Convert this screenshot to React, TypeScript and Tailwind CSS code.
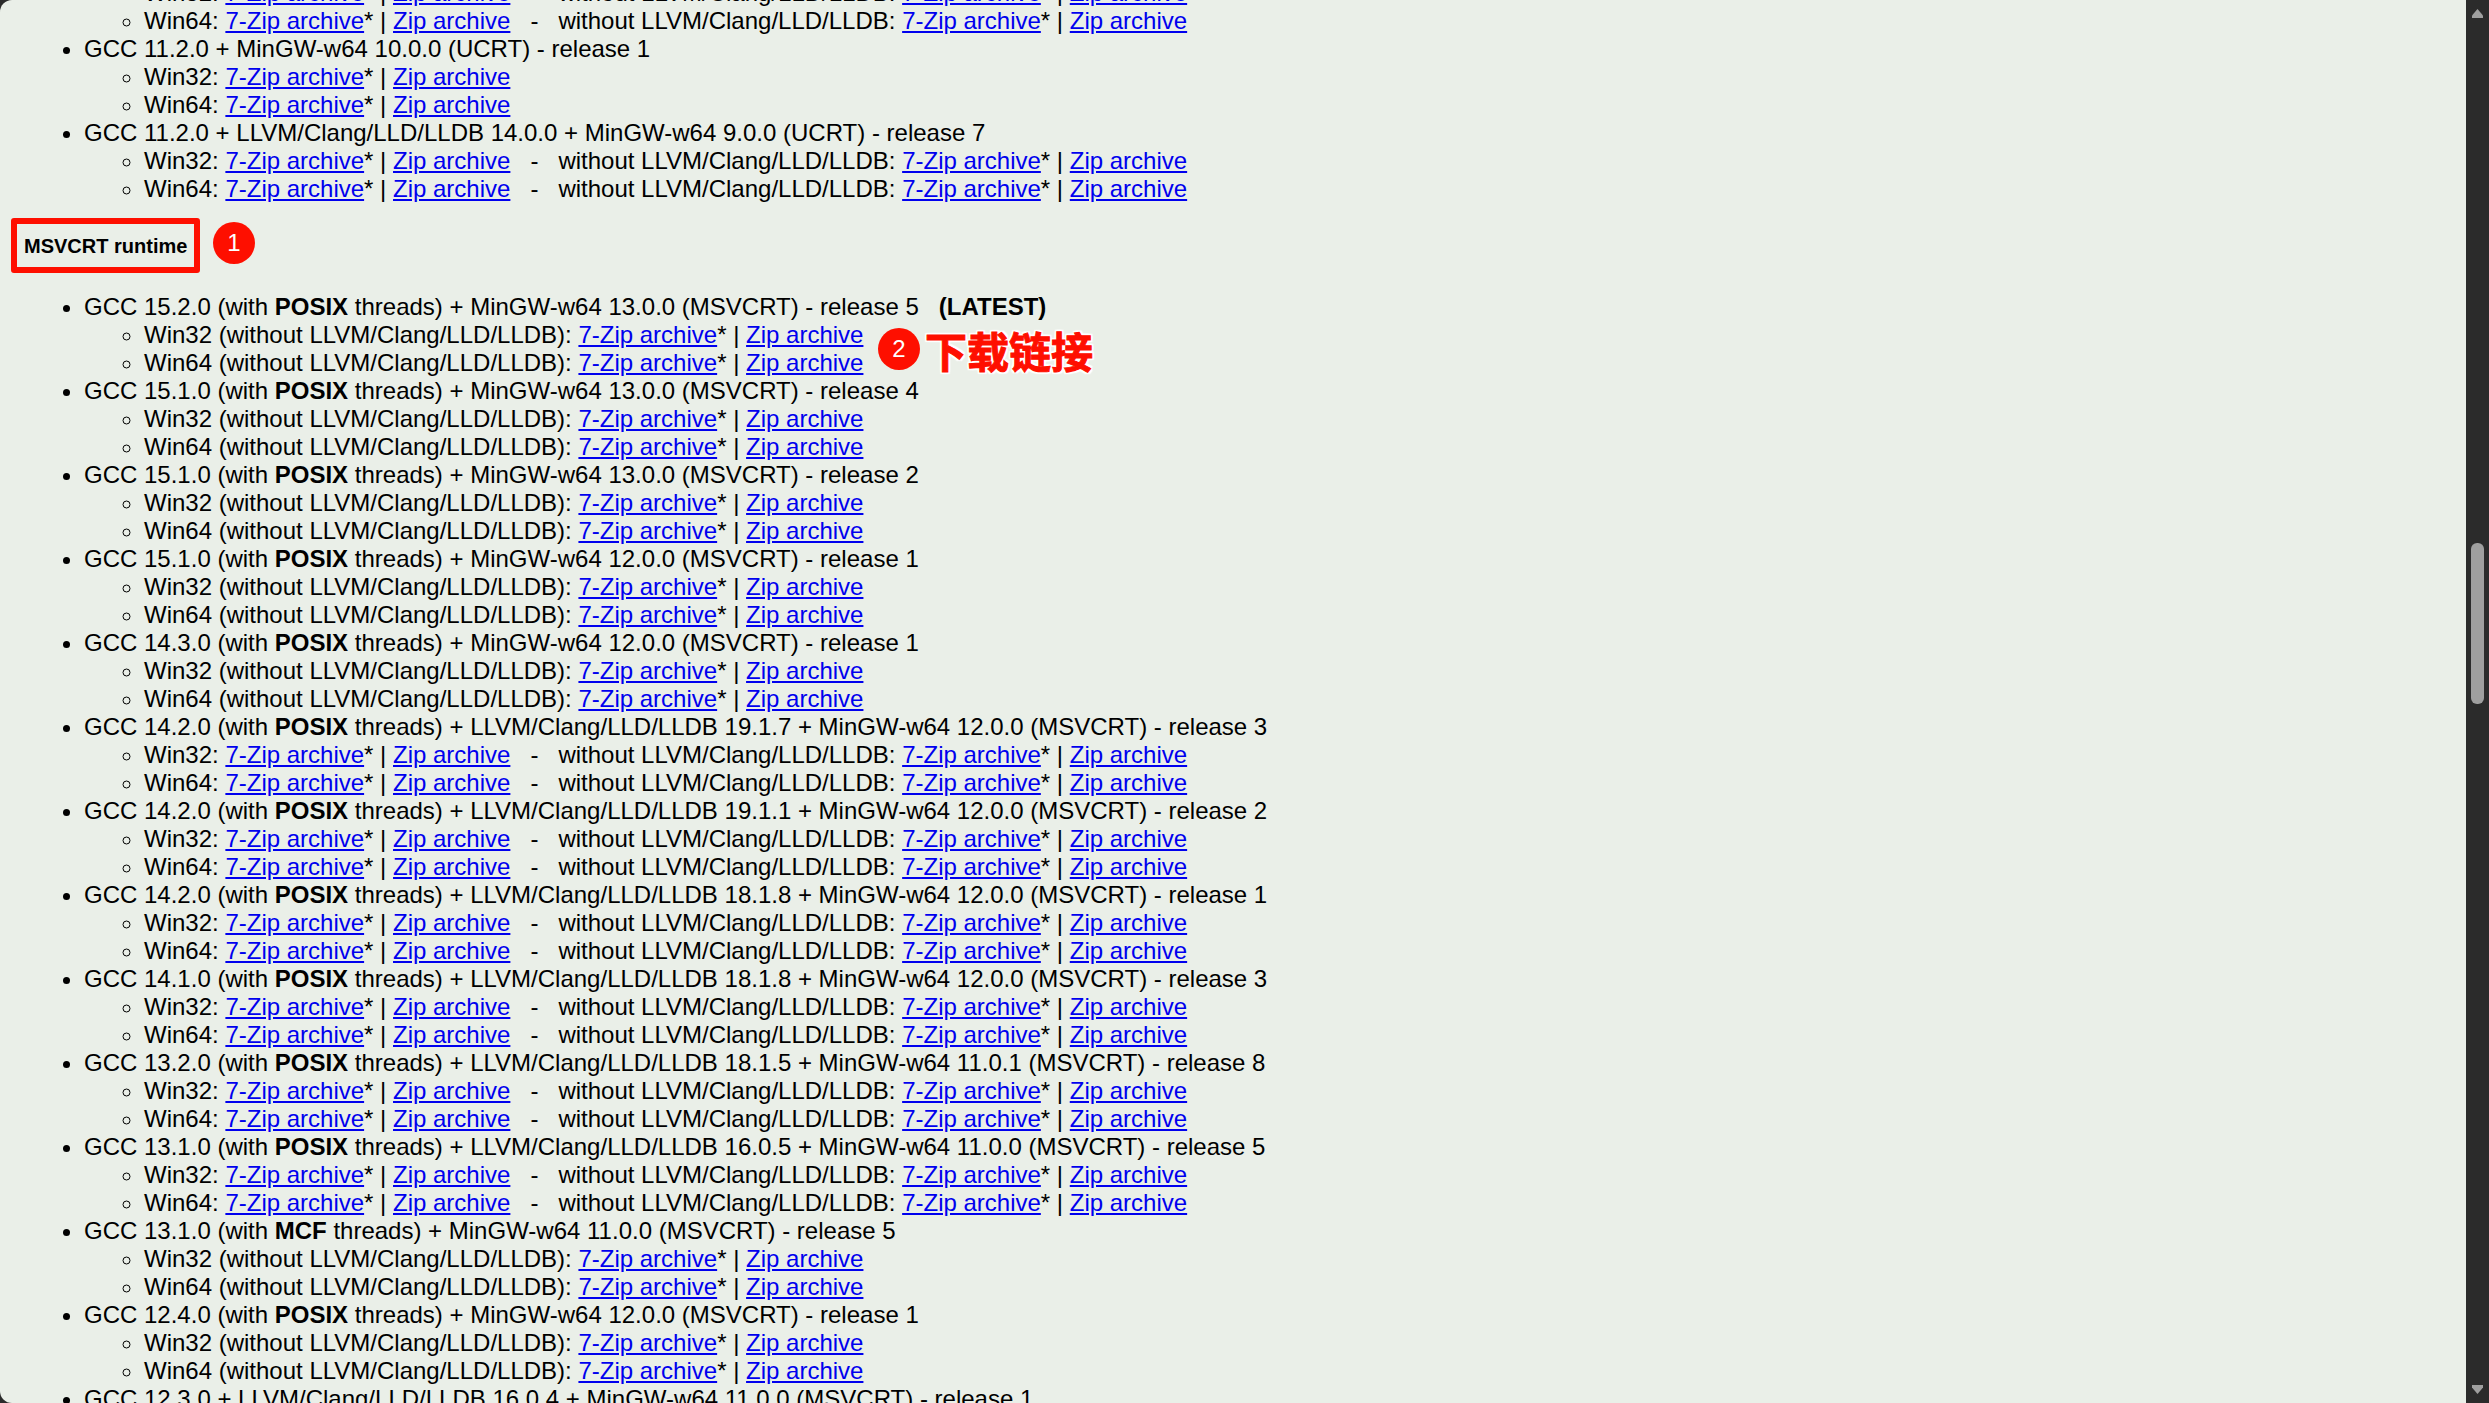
import React from "react";

const Link = ({ children }: { children: React.ReactNode }) => (
  <a href="#" className="text-[#0000ee] underline">{children}</a>
);

const Pair = () => (
  <>
    <Link>7-Zip archive</Link>* | <Link>Zip archive</Link>
  </>
);

const Both = ({ w }: { w: string }) => (
  <li>
    {w}: <Pair />&nbsp;&nbsp; - &nbsp;&nbsp;without LLVM/Clang/LLD/LLDB: <Pair />
  </li>
);

const Plain = ({ w }: { w: string }) => (
  <li>
    {w}: <Pair />
  </li>
);

const Without = ({ w }: { w: string }) => (
  <li>
    {w} (without LLVM/Clang/LLD/LLDB): <Pair />
  </li>
);

type Kind = "both" | "plain" | "without";

const Sub = ({ kind }: { kind: Kind }) => {
  const C = kind === "both" ? Both : kind === "plain" ? Plain : Without;
  return (
    <ul className="list-[circle] pl-[60px]">
      <C w="Win32" />
      <C w="Win64" />
    </ul>
  );
};

const Group = ({ title, kind }: { title: React.ReactNode; kind: Kind }) => (
  <li>
    {title}
    <Sub kind={kind} />
  </li>
);

const Posix = ({ gcc, rest, t = "POSIX" }: { gcc: string; rest: string; t?: string }) => (
  <>
    GCC {gcc} (with <b>{t}</b> threads) + {rest}
  </>
);

const llvmGroups: [string, string][] = [
  ["14.2.0", "LLVM/Clang/LLD/LLDB 19.1.7 + MinGW-w64 12.0.0 (MSVCRT) - release 3"],
  ["14.2.0", "LLVM/Clang/LLD/LLDB 19.1.1 + MinGW-w64 12.0.0 (MSVCRT) - release 2"],
  ["14.2.0", "LLVM/Clang/LLD/LLDB 18.1.8 + MinGW-w64 12.0.0 (MSVCRT) - release 1"],
  ["14.1.0", "LLVM/Clang/LLD/LLDB 18.1.8 + MinGW-w64 12.0.0 (MSVCRT) - release 3"],
  ["13.2.0", "LLVM/Clang/LLD/LLDB 18.1.5 + MinGW-w64 11.0.1 (MSVCRT) - release 8"],
  ["13.1.0", "LLVM/Clang/LLD/LLDB 16.0.5 + MinGW-w64 11.0.0 (MSVCRT) - release 5"],
];

export default function App() {
  return (
    <div className="flex h-screen overflow-hidden bg-[#2b2b2b] font-['Liberation_Sans',Arial,sans-serif] text-[24px] leading-[28px] text-black">
      <main className="relative flex-1 overflow-hidden rounded-l-[12px] bg-[#eaefe8] px-[24px]">
        <div className="-mt-[21px]">
          <ul className="list-disc pl-[60px]">
            <li className="list-none">
              <Sub kind="both" />
            </li>
            <Group title="GCC 11.2.0 + MinGW-w64 10.0.0 (UCRT) - release 1" kind="plain" />
            <Group title="GCC 11.2.0 + LLVM/Clang/LLD/LLDB 14.0.0 + MinGW-w64 9.0.0 (UCRT) - release 7" kind="both" />
          </ul>
          <p className="mt-[31px] mb-[35px] text-[20px] leading-[24px] font-bold">MSVCRT runtime</p>
          <ul className="list-disc pl-[60px]">
            <Group
              title={
                <>
                  <Posix gcc="15.2.0" rest="MinGW-w64 13.0.0 (MSVCRT) - release 5" />
                  &nbsp;&nbsp; <b>(LATEST)</b>
                </>
              }
              kind="without"
            />
            <Group title={<Posix gcc="15.1.0" rest="MinGW-w64 13.0.0 (MSVCRT) - release 4" />} kind="without" />
            <Group title={<Posix gcc="15.1.0" rest="MinGW-w64 13.0.0 (MSVCRT) - release 2" />} kind="without" />
            <Group title={<Posix gcc="15.1.0" rest="MinGW-w64 12.0.0 (MSVCRT) - release 1" />} kind="without" />
            <Group title={<Posix gcc="14.3.0" rest="MinGW-w64 12.0.0 (MSVCRT) - release 1" />} kind="without" />
            {llvmGroups.map(([gcc, rest], i) => (
              <Group key={i} title={<Posix gcc={gcc} rest={rest} />} kind="both" />
            ))}
            <Group title={<Posix gcc="13.1.0" t="MCF" rest="MinGW-w64 11.0.0 (MSVCRT) - release 5" />} kind="without" />
            <Group title={<Posix gcc="12.4.0" rest="MinGW-w64 12.0.0 (MSVCRT) - release 1" />} kind="without" />
            <Group title="GCC 12.3.0 + LLVM/Clang/LLD/LLDB 16.0.4 + MinGW-w64 11.0.0 (MSVCRT) - release 1" kind="both" />
          </ul>
        </div>

        {/* annotations drawn over the page */}
        <div className="absolute left-[11px] top-[218px] h-[55px] w-[189px] rounded-[3px] border-[6px] border-[#fe0f00]" />
        <div className="absolute left-[213px] top-[222px] flex h-[42px] w-[42px] items-center justify-center rounded-full bg-[#fe0f00] text-[24px] text-white">1</div>
        <div className="absolute left-[878px] top-[328px] flex h-[42px] w-[42px] items-center justify-center rounded-full bg-[#fe0f00] text-[24px] text-white">2</div>
        <div className="absolute left-[925px] top-[325px] font-['Noto_Sans_CJK_SC',sans-serif] text-[42px] leading-[50px] font-bold text-[#fe0f00] [-webkit-text-stroke:1px_#fe0f00] [text-shadow:2px_0_1px_#fff,-2px_0_1px_#fff,0_2px_1px_#fff,0_-2px_1px_#fff,2px_2px_1px_#fff,-2px_-2px_1px_#fff,2px_-2px_1px_#fff,-2px_2px_1px_#fff]">下载链接</div>
      </main>

      <aside className="relative w-[23px] shrink-0 bg-[#2b2b2b]">
        <svg className="absolute left-[6px] top-[9px]" width="11" height="9" viewBox="0 0 11 9">
          <path d="M5.5 0 L11 6.5 L11 9 L0 9 L0 6.5 Z" fill="#9f9f9f" />
        </svg>
        <div className="absolute left-[5px] top-[543px] h-[161px] w-[13px] rounded-[6px] bg-[#9f9f9f]" />
        <svg className="absolute left-[6px] top-[1385px]" width="11" height="9" viewBox="0 0 11 9">
          <path d="M0 0 L11 0 L11 2.5 L5.5 9 L0 2.5 Z" fill="#9f9f9f" />
        </svg>
      </aside>
    </div>
  );
}
